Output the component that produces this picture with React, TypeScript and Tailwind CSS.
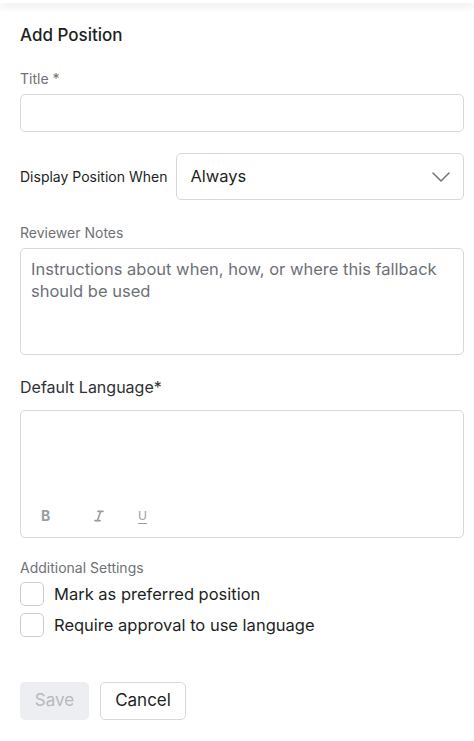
import { Italic } from "lucide-react";

const AddPosition = () => {
  return (
    <div className="min-h-screen bg-white font-['Inter',_'Liberation_Sans',_sans-serif] text-[#1d1f23]">
      <div className="h-[3px] bg-white shadow-[0_3px_7px_rgba(0,0,0,0.13)]" />

      <div className="pl-5 pr-[10px] pt-[19px]">
        <h1 className="text-[17px] font-medium leading-[26px]">Add Position</h1>

        <div className="mt-[21px]">
          <label className="block text-[14px] leading-[20px] text-[#6e7177]">Title *</label>
          <input
            type="text"
            className="mt-[5px] block h-[38px] w-full rounded-[5px] border border-[#d6d8dc] bg-white px-[10px] text-[16px] outline-none"
          />
        </div>

        <div className="mt-[21px] flex items-center gap-[9px]">
          <span className="shrink-0 text-[14px] leading-[20px] text-[#1d1f23]">Display Position When</span>
          <div className="flex h-[47px] flex-1 items-center justify-between rounded-[5px] border border-[#d6d8dc] pl-[13px] pr-[13px]">
            <span className="text-[16.5px] text-[#1d1f23]">Always</span>
            <svg width="18" height="10" viewBox="0 0 18 10" fill="none" className="text-[#6e7177]">
              <path d="M1 1l8 8 8-8" stroke="currentColor" strokeWidth="1.5" strokeLinecap="round" strokeLinejoin="round" />
            </svg>
          </div>
        </div>

        <div className="mt-[23px]">
          <label className="block text-[14px] leading-[20px] text-[#6e7177]">Reviewer Notes</label>
          <textarea
            placeholder="Instructions about when, how, or where this fallback should be used"
            className="mt-[5px] block h-[107px] w-full resize-none rounded-[5px] border border-[#d6d8dc] px-[10px] pt-[9px] text-[16.5px] leading-[22px] text-[#1d1f23] outline-none placeholder:text-[#6e7177]"
          />
        </div>

        <div className="mt-[21px]">
          <label className="block text-[16px] leading-[22px] text-[#2e3136]">Default Language*</label>
          <div className="mt-[12px] flex h-[128px] flex-col justify-end rounded-[5px] border border-[#d6d8dc] pb-[12px]">
            <div className="flex items-center pl-[20px] text-[14px] leading-[18px] text-[#9a9da3]">
              <span className="w-[51px] font-bold">B</span>
              <span className="w-[46px]">
                <Italic className="h-[14px] w-[14px]" strokeWidth={2.8} />
              </span>
              <span className="text-[12px] underline underline-offset-[3px]">U</span>
            </div>
          </div>
        </div>

        <div className="mt-[20px]">
          <div className="text-[14px] leading-[20px] text-[#6e7177]">Additional Settings</div>
          <div className="mt-[4px] flex flex-col gap-[7px]">
            <label className="flex items-center gap-[10px]">
              <input
                type="checkbox"
                className="h-[24px] w-[24px] appearance-none rounded-[5px] border border-[#c9ccd1] bg-white"
              />
              <span className="text-[16.5px] leading-[24px] text-[#1d1f23]">Mark as preferred position</span>
            </label>
            <label className="flex items-center gap-[10px]">
              <input
                type="checkbox"
                className="h-[24px] w-[24px] appearance-none rounded-[5px] border border-[#c9ccd1] bg-white"
              />
              <span className="text-[16.5px] leading-[24px] text-[#1d1f23]">Require approval to use language</span>
            </label>
          </div>
        </div>

        <div className="mt-[45px] flex gap-[11px]">
          <button
            disabled
            className="h-[38px] w-[69px] rounded-[5px] bg-[#eceef1] text-[17px] text-[#b6b9be]"
          >
            Save
          </button>
          <button className="h-[38px] w-[86px] rounded-[5px] border border-[#d6d8dc] bg-white text-[17px] text-[#1d1f23]">
            Cancel
          </button>
        </div>
      </div>
    </div>
  );
};

export default AddPosition;
